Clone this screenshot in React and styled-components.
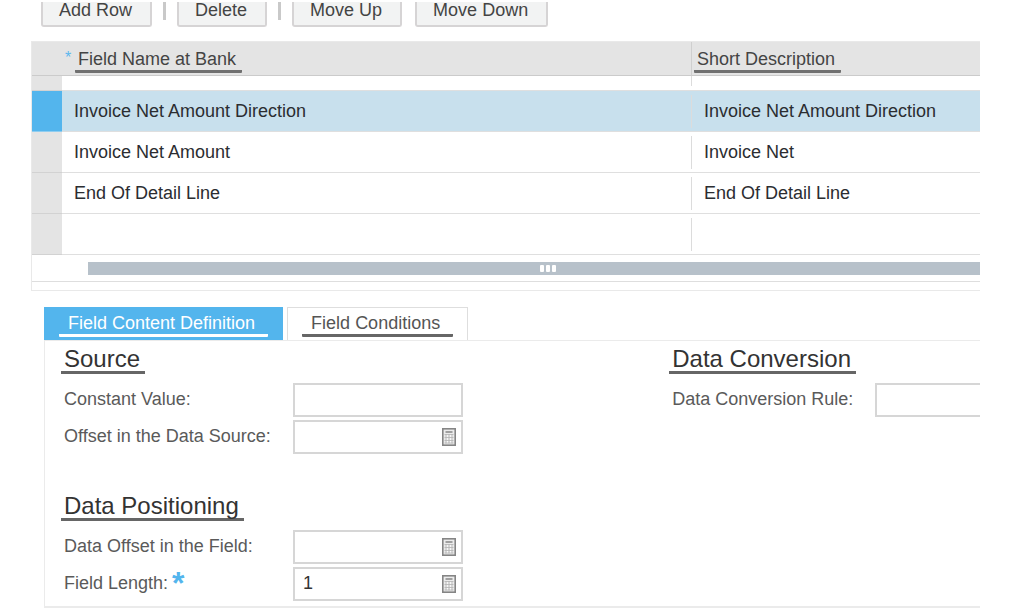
import React from "react";
import styled, { createGlobalStyle } from "styled-components";

const GlobalStyle = createGlobalStyle`
  * { box-sizing: border-box; }
  body {
    margin: 0;
    background: #fff;
    color: #333;
    font-family: "Liberation Sans", Arial, sans-serif;
    font-size: 18px;
    line-height: 20px;
  }
`;

const Page = styled.main`
  padding: 2px 44px 8px 31px;
`;

const Toolbar = styled.div`
  display: flex;
  align-items: flex-start;
  padding: 0 0 14px 10px;
`;

const ToolButton = styled.button`
  height: 25px;
  padding: 0 18px 8px 16px;
  border: 2px solid #d6d4d5;
  border-top: 0;
  border-radius: 0 0 3px 3px;
  background: #f2f3f3;
  color: #444;
  font: inherit;
  line-height: 16px;
  white-space: nowrap;

  & + & { margin-left: 13px; }
`;

const Separator = styled.span`
  width: 3px;
  height: 18px;
  margin: 0 11px;
  background: #c9c9c9;
`;

const GridFrame = styled.section`
  border: 1px solid #e9e9e9;
  border-right: 0;
`;

const Table = styled.table`
  width: 100%;
  table-layout: fixed;
  border-collapse: separate;
  border-spacing: 0;
  text-align: left;
`;

const SelectorColumn = styled.col`
  width: 30px;
`;

const NameColumn = styled.col`
  width: 629px;
`;

const HeaderCell = styled.th`
  height: 34px;
  padding: ${(p) => (p.$divided ? "0 0 0 2px" : "0 0 0 3px")};
  border-bottom: 1px solid #cbcbcb;
  border-left: ${(p) => (p.$divided ? "1px solid #cfcfcf" : "0")};
  background: #e4e4e4;
  color: #444;
  font-weight: 400;
  vertical-align: top;
`;

const HeaderLabel = styled.span`
  display: inline-block;
  height: 24px;
  margin-top: 7px;
  padding: 0 6px 0 3px;
  border-bottom: 3px solid #707070;
  border-radius: 1px;
`;

const HeaderMark = styled.span`
  display: inline-block;
  width: 10px;
  color: #5cb8ee;
  font-size: 16px;
  vertical-align: top;
  line-height: 32px;
`;

const Row = styled.tr`
  height: ${(p) => (p.$clipped ? "15px" : "41px")};
`;

const Selector = styled.th`
  padding: 0;
  border-bottom: 1px solid ${(p) => (p.$selected ? "#8fcdf0" : "#d2d2d2")};
  background: ${(p) => (p.$selected ? "#53b5ed" : "#e4e4e4")};
`;

const Cell = styled.td`
  padding: 0;
  border-bottom: 1px solid #dfdfdf;
  background: ${(p) => (p.$selected ? "#c8e0ed" : "#fff")};
  color: #2b2d31;
`;

const CellContent = styled.div`
  height: ${(p) => (p.$clipped ? "10px" : "33px")};
  margin-bottom: ${(p) => (p.$clipped ? "4px" : "0")};
  padding-left: 12px;
  border-left: ${(p) => (p.$divided ? "1px solid #dcdcdc" : "0")};
  line-height: 33px;
`;

const ScrollTrack = styled.div`
  padding: 7px 0 6px 56px;
  border-bottom: 1px solid #dedede;
`;

const ScrollThumb = styled.div`
  display: flex;
  align-items: center;
  justify-content: center;
  gap: 2px;
  height: 13px;
  padding-left: 28px;
  background: #b7c1ca;
`;

const Grip = styled.span`
  width: 4px;
  height: 7px;
  border-radius: 1px;
  background: #fff;
`;

const GridFooter = styled.div`
  height: 8px;
`;

const Detail = styled.section`
  padding: 16px 0 0 13px;
`;

const Tabs = styled.div`
  display: flex;
  gap: 4px;
`;

const Tab = styled.button`
  height: 33px;
  padding: 0 14px;
  border: 1px solid ${(p) => (p.$active ? "#53b5ed" : "#dedede")};
  border-bottom: 0;
  background: ${(p) => (p.$active ? "#53b5ed" : "#fff")};
  color: ${(p) => (p.$active ? "#fff" : "#555")};
  font: inherit;
  white-space: nowrap;
`;

const TabLabel = styled.span`
  display: block;
  height: 26px;
  padding: 2px 13px 0 9px;
  border-bottom: 3px solid ${(p) => (p.$active ? "#fff" : "#666")};
  border-radius: 1px;
`;

const Panel = styled.div`
  display: grid;
  grid-template-columns: 83fr 42fr;
  padding: 4px 0 5px 19px;
  border: 2px solid #ebebeb;
  border-width: 1px 0 2px 1px;
`;

const Group = styled.section`
  min-width: 0;
  & + & { margin-top: 38px; }
`;

const GroupTitle = styled.h2`
  width: fit-content;
  height: 29px;
  margin: 0 0 9px -3px;
  padding: 0 5px 0 3px;
  border-bottom: 3px solid #666;
  color: #333;
  font-size: 24px;
  font-weight: 400;
  line-height: 28px;
  white-space: nowrap;
`;

const Field = styled.div`
  display: flex;
  align-items: center;
  & + & { margin-top: 3px; }
`;

const FieldLabel = styled.label`
  flex: none;
  width: ${(p) => (p.$narrow ? "203px" : "229px")};
  padding-bottom: 2px;
  color: #5a5a5a;
  white-space: nowrap;
`;

const Required = styled.span`
  display: inline-block;
  height: 20px;
  margin-left: 4px;
  color: #53b5ed;
  font-size: 32px;
  font-weight: 700;
  line-height: 20px;
  vertical-align: top;
`;

const InputBox = styled.div`
  display: flex;
  flex: ${(p) => (p.$wide ? "1" : "none")};
  align-items: center;
  width: 170px;
  min-width: 0;
  height: 34px;
  padding-right: 5px;
  border: 2px solid #d6d6d6;
  border-right-width: ${(p) => (p.$wide ? "0" : "2px")};
`;

const TextInput = styled.input`
  flex: 1;
  min-width: 0;
  height: 30px;
  padding: 0 8px 2px;
  border: 0;
  outline: 0;
  background: transparent;
  color: #333;
  font: inherit;
`;

const CalculatorIcon = styled.svg`
  flex: none;
  width: 14px;
  height: 18px;
`;

function Calculator() {
  return (
    <CalculatorIcon viewBox="0 0 14 18" aria-hidden="true">
      <rect x="0.8" y="0.8" width="12.4" height="16.4" fill="#ececec" stroke="#858585" strokeWidth="1.6" />
      <path d="M3.5 4h7" stroke="#777" strokeWidth="1.3" />
      <path d="M2.5 6.5h9M2.5 9.5h9M2.5 12.5h9M2.5 15h9M4 6v9.5M7 6v9.5M10 6v9.5" stroke="#b4b4b4" strokeWidth="0.8" />
      <path d="M5 7.5h1v1h-1zM8 7.5h1v1h-1zM5 10.5h1v1h-1zM8 10.5h1v1h-1zM5 13.3h1v1h-1zM8 13.3h1v1h-1z" fill="#fff" />
    </CalculatorIcon>
  );
}

function FormField({ id, label, value = "", calculator, required, narrow, wide }) {
  return (
    <Field>
      <FieldLabel htmlFor={id} $narrow={narrow}>
        {label}
        {required && <Required>*</Required>}
      </FieldLabel>
      <InputBox $wide={wide}>
        <TextInput id={id} type="text" defaultValue={value} required={required} />
        {calculator && <Calculator />}
      </InputBox>
    </Field>
  );
}

const rows = [
  { name: "", description: "", clipped: true },
  { name: "Invoice Net Amount Direction", description: "Invoice Net Amount Direction", selected: true },
  { name: "Invoice Net Amount", description: "Invoice Net" },
  { name: "End Of Detail Line", description: "End Of Detail Line" },
  { name: "", description: "" },
];

export default function App() {
  return (
    <>
      <GlobalStyle />
      <Page>
        <Toolbar>
          <ToolButton type="button">Add Row</ToolButton>
          <Separator />
          <ToolButton type="button">Delete</ToolButton>
          <Separator />
          <ToolButton type="button">Move Up</ToolButton>
          <ToolButton type="button">Move Down</ToolButton>
        </Toolbar>

        <GridFrame>
          <Table>
            <colgroup>
              <SelectorColumn />
              <NameColumn />
              <col />
            </colgroup>
            <thead>
              <tr>
                <HeaderCell />
                <HeaderCell scope="col">
                  <HeaderMark>*</HeaderMark>
                  <HeaderLabel>Field Name at Bank</HeaderLabel>
                </HeaderCell>
                <HeaderCell scope="col" $divided>
                  <HeaderLabel>Short Description</HeaderLabel>
                </HeaderCell>
              </tr>
            </thead>
            <tbody>
              {rows.map((row, i) => (
                <Row key={i} $clipped={row.clipped}>
                  <Selector scope="row" $selected={row.selected} />
                  <Cell $selected={row.selected}>
                    <CellContent $clipped={row.clipped}>{row.name}</CellContent>
                  </Cell>
                  <Cell $selected={row.selected}>
                    <CellContent $clipped={row.clipped} $divided>
                      {row.description}
                    </CellContent>
                  </Cell>
                </Row>
              ))}
            </tbody>
          </Table>
          <ScrollTrack>
            <ScrollThumb>
              <Grip />
              <Grip />
              <Grip />
            </ScrollThumb>
          </ScrollTrack>
          <GridFooter />
        </GridFrame>

        <Detail>
          <Tabs role="tablist">
            <Tab type="button" role="tab" aria-selected="true" $active>
              <TabLabel $active>Field Content Definition</TabLabel>
            </Tab>
            <Tab type="button" role="tab" aria-selected="false">
              <TabLabel>Field Conditions</TabLabel>
            </Tab>
          </Tabs>
          <Panel role="tabpanel">
            <div>
              <Group>
                <GroupTitle>Source</GroupTitle>
                <FormField id="constant-value" label="Constant Value:" />
                <FormField id="source-offset" label="Offset in the Data Source:" calculator />
              </Group>
              <Group>
                <GroupTitle>Data Positioning</GroupTitle>
                <FormField id="field-offset" label="Data Offset in the Field:" calculator />
                <FormField id="field-length" label="Field Length:" value="1" calculator required />
              </Group>
            </div>
            <Group as="div">
              <GroupTitle>Data Conversion</GroupTitle>
              <FormField id="conversion-rule" label="Data Conversion Rule:" narrow wide />
            </Group>
          </Panel>
        </Detail>
      </Page>
    </>
  );
}
